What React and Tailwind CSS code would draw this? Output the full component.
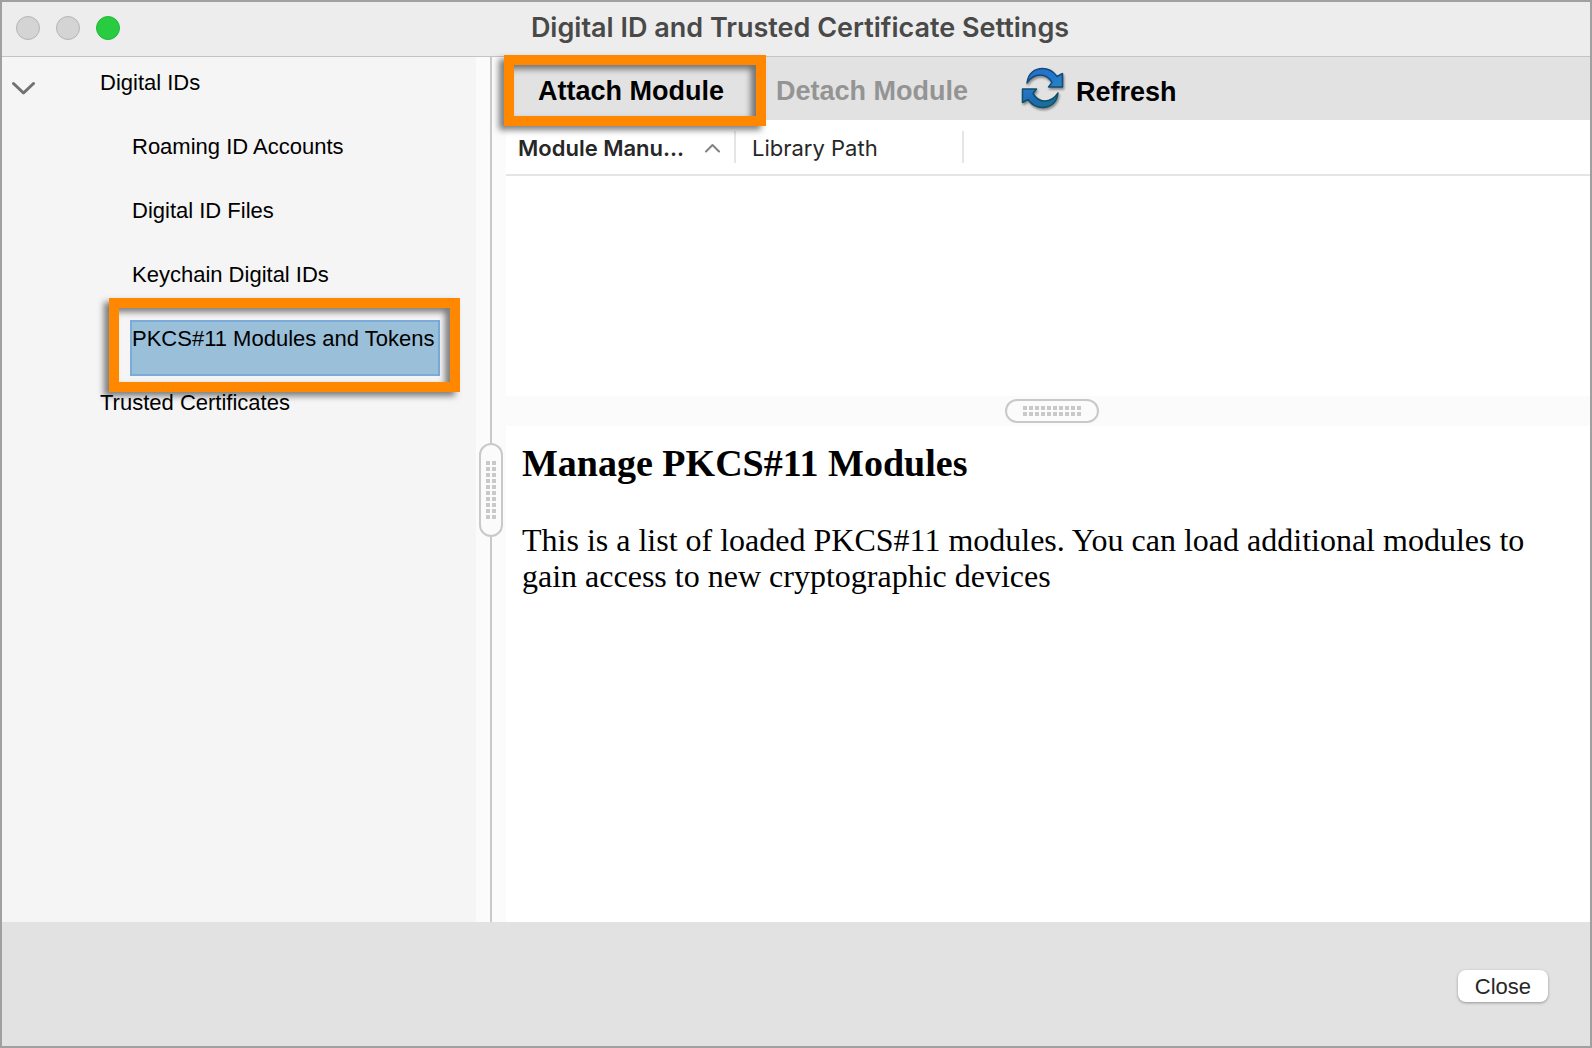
import React, { useState } from "react";

const digitalIdItems = [
  "Roaming ID Accounts",
  "Digital ID Files",
  "Keychain Digital IDs",
  "PKCS#11 Modules and Tokens",
];

const Highlight = ({ className }) => (
  <div
    aria-hidden="true"
    className={`absolute pointer-events-none border-10 border-[#ff8800] [filter:drop-shadow(-5px_4px_3px_rgba(0,0,0,0.5))] ${className}`}
  />
);

const Grip = ({ className }) => (
  <span className={`grid gap-0.5 ${className}`}>
    {Array.from({ length: 20 }, (_, i) => (
      <span key={i} className="size-1 bg-[#c9c9c9]" />
    ))}
  </span>
);

const RefreshIcon = () => (
  <svg
    width="48"
    height="48"
    viewBox="-2 -1 48 48"
    className="shrink-0"
    aria-hidden="true"
  >
    <defs>
      <linearGradient id="arrowTop" x1="0" y1="0" x2="1" y2="1">
        <stop offset="0" stopColor="#2b6fc4" />
        <stop offset="0.6" stopColor="#1f78cf" />
        <stop offset="1" stopColor="#2c86b4" />
      </linearGradient>
      <linearGradient id="arrowBottom" x1="0" y1="0" x2="1" y2="1">
        <stop offset="0" stopColor="#2878d0" />
        <stop offset="0.5" stopColor="#1f6aae" />
        <stop offset="1" stopColor="#15718a" />
      </linearGradient>
    </defs>
    <g
      strokeWidth="1.5"
      strokeLinejoin="round"
      className="[filter:drop-shadow(1px_2px_1px_rgba(0,0,0,0.4))]"
    >
      <path
        d="M5 16C6 6 13 1.500 20.500 1.500C26.500 1.500 31.500 4.500 35 9.500L40.500 6.500V20H26.500L30 15.500C27 10.500 23.500 8 18.500 8C12.500 8 8.500 10.500 5 16Z"
        fill="url(#arrowTop)"
        stroke="#124a7c"
      />
      <path
        d="M36 26C35 36 28 40.500 20.500 40.500C14.500 40.500 9.500 37.500 6 32.500L.5 35.500V22H14.500L11 26.500C14 31.500 17.500 34 22.500 34C28.500 34 32.500 31.500 36 26Z"
        fill="url(#arrowBottom)"
        stroke="#0f5068"
      />
    </g>
  </svg>
);

const TreeItem = ({ label, selected, onClick }) => (
  <button
    type="button"
    onClick={onClick}
    className={`my-1 block h-14 border-2 pr-[3px] text-left whitespace-nowrap ${
      selected ? "border-[#7cabd9] bg-[#9abfd9]" : "border-transparent"
    }`}
  >
    <span className="block h-13">{label}</span>
  </button>
);

const App = () => {
  const [selected, setSelected] = useState("PKCS#11 Modules and Tokens");
  const [expanded, setExpanded] = useState(true);

  return (
    <div className="flex min-h-screen flex-col border-2 border-[#a0a0a0] bg-[#ededed] font-['Liberation_Sans',Arial,sans-serif] text-black">
      <header className="relative flex h-[55px] items-center justify-center border-b border-[#c4c4c4]">
        <div className="absolute top-3.5 left-3.5 flex gap-4">
          <button
            type="button"
            aria-label="Close window"
            className="size-6 rounded-full border border-[#b5b5b5] bg-[#d4d4d4]"
          />
          <button
            type="button"
            aria-label="Minimize window"
            className="size-6 rounded-full border border-[#b5b5b5] bg-[#d4d4d4]"
          />
          <button
            type="button"
            aria-label="Zoom window"
            className="size-6 rounded-full border border-[#25b638] bg-[#28cc41]"
          />
        </div>
        <h1 className="pb-0.5 pl-2 font-[Inter,sans-serif] text-[27px] leading-8 font-semibold text-[#494949]">
          Digital ID and Trusted Certificate Settings
        </h1>
      </header>

      <main className="flex flex-1">
        <nav className="w-[474px] shrink-0 bg-[#f5f5f5] pt-[3px] text-[22px] leading-[34px]">
          <ul>
            <li className="relative">
              <div className="flex">
                <button
                  type="button"
                  aria-label="Toggle Digital IDs"
                  aria-expanded={expanded}
                  onClick={() => setExpanded(!expanded)}
                  className="flex h-16 w-24 items-start pt-5 pl-2.5"
                >
                  <svg width="24" height="16" viewBox="0 0 24 16" fill="none">
                    <path
                      d="M1.500 3.500L11.500 13L21.500 3.500"
                      stroke="#717171"
                      strokeWidth="3"
                      strokeLinecap="round"
                      strokeLinejoin="round"
                    />
                  </svg>
                </button>
                <TreeItem
                  label="Digital IDs"
                  selected={selected === "Digital IDs"}
                  onClick={() => setSelected("Digital IDs")}
                />
              </div>
              {expanded && (
                <ul className="pl-32">
                  {digitalIdItems.map((item) => (
                    <li key={item} className="relative flex">
                      <TreeItem
                        label={item}
                        selected={selected === item}
                        onClick={() => setSelected(item)}
                      />
                      {item === "PKCS#11 Modules and Tokens" && (
                        <Highlight className="-top-[18px] -left-[21px] h-[94px] w-[351px]" />
                      )}
                    </li>
                  ))}
                </ul>
              )}
            </li>
            <li className="relative pl-24">
              <TreeItem
                label="Trusted Certificates"
                selected={selected === "Trusted Certificates"}
                onClick={() => setSelected("Trusted Certificates")}
              />
            </li>
          </ul>
        </nav>

        <div className="flex w-[30px] shrink-0 flex-col items-center bg-[#fbfbfb]">
          <div className="w-0.5 flex-1 bg-[#c9c9c9]" />
          <button
            type="button"
            aria-label="Resize sidebar"
            className="flex h-[94px] w-6 items-center justify-center rounded-full border-2 border-[#c9c9c9]"
          >
            <Grip className="grid-cols-2" />
          </button>
          <div className="w-0.5 flex-1 bg-[#c9c9c9]" />
        </div>

        <section className="flex min-w-0 flex-1 flex-col bg-white">
          <div className="flex h-[63px] items-center bg-[#e2e2e2] text-[27px] leading-8 font-bold">
            <div className="relative">
              <button type="button" className="block px-8 pt-[18px] pb-3.5">
                Attach Module
              </button>
              <Highlight className="-top-0.5 -left-0.5 h-[71px] w-[262px]" />
            </div>
            <button
              type="button"
              disabled
              className="ml-5 pt-[18px] pb-3.5 text-[#949494]"
            >
              Detach Module
            </button>
            <button type="button" className="ml-13 flex items-center gap-2 pt-0.5">
              <RefreshIcon />
              <span className="pt-1">Refresh</span>
            </button>
          </div>

          <div className="h-[276px]">
            <table className="w-full table-fixed border-collapse font-[Inter,sans-serif] text-[22px] text-[#272727]">
              <thead>
                <tr className="h-[55px] border-b-2 border-[#e5e5e5] text-left">
                  <th className="w-[230px] p-0 font-semibold">
                    <div className="flex h-8 items-center justify-between border-r-2 border-[#e5e5e5] pr-3.5 pl-3">
                      <span className="pt-0.5">Module Manu...</span>
                      <svg width="16" height="12" viewBox="0 0 16 12" fill="none">
                        <path
                          d="M2 10.500L8.500 4L15 10.500"
                          stroke="#828282"
                          strokeWidth="2"
                          strokeLinecap="round"
                          strokeLinejoin="round"
                        />
                      </svg>
                    </div>
                  </th>
                  <th className="w-[228px] p-0 font-normal">
                    <div className="flex h-8 items-center border-r-2 border-[#e5e5e5] pl-4">
                      <span className="pt-0.5">Library Path</span>
                    </div>
                  </th>
                  <td />
                </tr>
              </thead>
            </table>
          </div>

          <div className="flex h-[30px] items-center justify-center bg-[#fbfbfb] pl-2">
            <button
              type="button"
              aria-label="Resize module list"
              className="flex h-6 w-[94px] items-center justify-center rounded-full border-2 border-[#c9c9c9]"
            >
              <Grip className="grid-cols-10" />
            </button>
          </div>

          <article className="flex-1 px-4 pt-[15px] font-['Liberation_Serif','Times_New_Roman',serif]">
            <h2 className="text-[38px] leading-11 font-bold">
              Manage PKCS#11 Modules
            </h2>
            <p className="mt-[37px] text-[32px] leading-9">
              This is a list of loaded PKCS#11 modules. You can load additional
              modules to gain access to new cryptographic devices
            </p>
          </article>
        </section>
      </main>

      <footer className="flex h-[124px] items-start justify-end bg-[#e2e2e2] pt-12 pr-[42px]">
        <button
          type="button"
          className="h-8 rounded-lg bg-white px-[17px] text-[22px] leading-[34px] text-[#272727] shadow-[0_1px_3px_rgba(0,0,0,0.35)]"
        >
          Close
        </button>
      </footer>
    </div>
  );
};

export default App;
